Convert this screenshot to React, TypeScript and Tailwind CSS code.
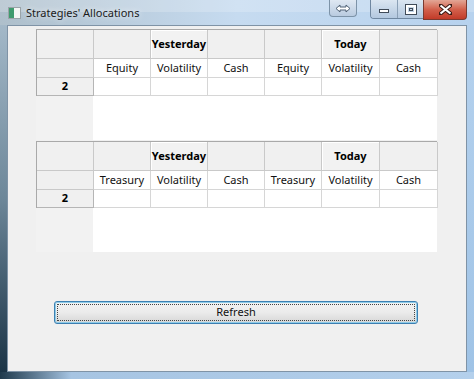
import React from "react";

const font = { fontFamily: '"Noto Sans", "Open Sans", Arial, sans-serif' };

function AllocTable({ first, top }: { first: string; top: string }) {
  const subs = [first, "Volatility", "Cash", first, "Volatility", "Cash"];
  return (
    <div className={`w-[401px] ${top}`}>
      <div className="grid grid-cols-[57px_57px_57px_57px_57px_58px_58px] border-l border-t border-[#a9a9a9]">
        {/* header row */}
        <div className="h-[29px] bg-[#f0f0f0] border-r border-b border-[#c9c9c9]" />
        {["", "Yesterday", "", "", "Today", ""].map((h, i) => (
          <div
            key={i}
            className={`h-[29px] flex items-center justify-center border-r border-b border-[#c9c9c9] text-[11px] font-bold text-black ${
              h ? "bg-[#f2f2f2] shadow-[inset_1px_1px_0_#ffffff]" : "bg-[#f0f0f0]"
            }`}
          >
            {h}
          </div>
        ))}
        {/* sub header row */}
        <div className="h-[19px] bg-[#f0f0f0] border-r border-b border-[#c9c9c9]" />
        {subs.map((s, i) => (
          <div
            key={i}
            className="h-[19px] bg-white flex items-center justify-center border-r border-b border-[#d6d6d6] text-[11px] text-[#111]"
          >
            {s}
          </div>
        ))}
        {/* data row */}
        <div className="h-[18px] bg-[#f0f0f0] border-r border-b border-[#b5b5b5] flex items-center justify-center text-[11px] font-bold text-black">
          2
        </div>
        {subs.map((_, i) => (
          <div key={i} className="h-[18px] bg-white border-r border-b border-[#d6d6d6]" />
        ))}
      </div>
      <div className="flex">
        <div className="w-[57px] h-[44px] bg-[#f2f2f2]" />
        <div className="w-[344px] h-[44px] bg-white" />
      </div>
    </div>
  );
}

export default function App() {
  return (
    <div
      className="w-[474px] h-[379px] overflow-hidden flex flex-col bg-gradient-to-r from-[#aebfcb] via-[#c6dbf0] to-[#b7d2ee]"
      style={font}
    >
      {/* title bar */}
      <div className="h-[25px] flex items-start relative">
        <div className="absolute inset-x-0 top-0 h-[12px] bg-white/20" />
        <div className="relative mt-[7px] ml-[8px] w-[13px] h-[12px] bg-[#f4f6f4] border border-[#9aa3a8] flex">
          <div className="w-[5px] h-full bg-[#3f9b6e]" />
        </div>
        <div className="relative ml-[5px] mt-[5px] text-[11px] text-[#1b1b1b] leading-[15px] [text-shadow:0_0_6px_#ffffff]">
          Strategies' Allocations
        </div>
        <div className="flex-1" />
        {/* snap button */}
        <div className="relative w-[28px] h-[17px] mr-[13px] rounded-b-[4px] border border-t-0 border-[#7d93a8] bg-gradient-to-b from-[#dfe8f2] to-[#b9cbe0] flex items-center justify-center">
          <svg width="16" height="9" viewBox="0 0 16 9">
            <path d="M1 4.5 L5 1 V3 H11 V1 L15 4.5 L11 8 V6 H5 V8 Z" fill="#ffffff" stroke="#4f6174" strokeWidth="1" />
          </svg>
        </div>
        {/* min / max */}
        <div className="relative flex h-[19px] rounded-bl-[4px] border border-t-0 border-r-0 border-[#6f87a0] overflow-hidden">
          <div className="w-[27px] h-full bg-gradient-to-b from-[#dbe6f1] to-[#b3c8df] border-r border-[#8ba0b6] flex items-end justify-center pb-[5px]">
            <div className="w-[10px] h-[4px] bg-white border border-[#404b58]" />
          </div>
          <div className="w-[25px] h-full bg-gradient-to-b from-[#dbe6f1] to-[#b3c8df] flex items-center justify-center">
            <div className="w-[10px] h-[9px] border-[2px] border-white outline outline-1 outline-[#404b58] flex items-center justify-center">
              <div className="w-[4px] h-[3px] border border-[#404b58]" />
            </div>
          </div>
        </div>
        <div className="relative w-[44px] h-[20px] mr-[7px] rounded-br-[4px] border border-t-0 border-[#7a3a30] bg-gradient-to-b from-[#e2a696] via-[#d2604c] to-[#c23a28] flex items-center justify-center">
          <svg width="13" height="11" viewBox="0 0 13 11">
            <path d="M1 1 L12 10 M12 1 L1 10" stroke="#3a1a14" strokeWidth="4" strokeLinecap="square" />
            <path d="M1.5 1.5 L11.5 9.5 M11.5 1.5 L1.5 9.5" stroke="#ffffff" strokeWidth="2.2" />
          </svg>
        </div>
      </div>

      {/* body with side frames */}
      <div className="flex flex-1">
        <div className="w-[7px] bg-gradient-to-b from-[#a3b8c8] via-[#6d8799] to-[#1b3446]" />
        <div className="w-[460px] h-[347px] bg-[#f0f0f0] border border-[#7f93a6] flex flex-col items-start pl-[28px] pt-[3px]">
          <AllocTable first="Equity" top="" />
          <AllocTable first="Treasury" top="mt-[1px]" />
          <div className="ml-[18px] mt-[49px] w-[364px] h-[23px] rounded-[3px] border border-[#3c7fb1] shadow-[inset_0_0_0_1px_#8ecbe8] bg-gradient-to-b from-[#f2f2f2] via-[#ebebeb] to-[#d6d6d6] flex items-center justify-center p-[2px]">
            <div className="w-full h-full border border-dotted border-[#444] flex items-center justify-center text-[11px] text-[#111]">
              Refresh
            </div>
          </div>
        </div>
        <div className="w-[7px] bg-gradient-to-b from-[#b6d2ee] to-[#9fc3e6]" />
      </div>
      <div className="h-[7px] bg-gradient-to-r from-[#1f3a4c] via-[#a6c4e2] via-15% to-[#b4d0ec]" />
    </div>
  );
}
